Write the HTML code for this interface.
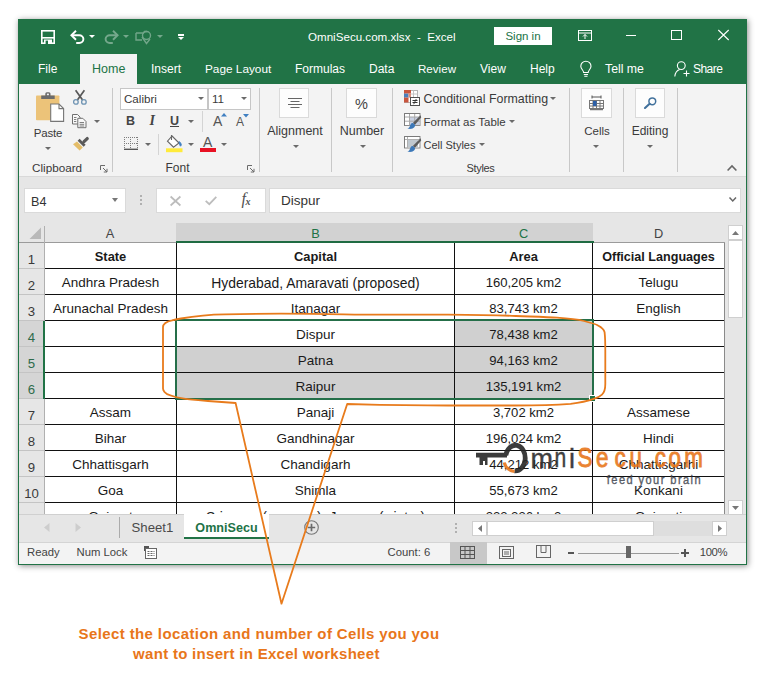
<!DOCTYPE html>
<html><head><meta charset="utf-8">
<style>
*{margin:0;padding:0;box-sizing:border-box}
html,body{width:764px;height:680px;overflow:hidden;background:#fff}
body{position:relative;font-family:"Liberation Sans",sans-serif;font-size:11px;color:#3a3a3a}
.a{position:absolute}
.t{position:absolute;white-space:nowrap;line-height:14px}
.w{color:#fff}
.c{text-align:center}
svg{position:absolute;overflow:visible}
#win{left:18px;top:19px;width:729px;height:546px;background:#e6e6e6;border:1px solid #217346;box-shadow:1px 1px 6px 0 rgba(0,0,0,.45)}
.sep{position:absolute;width:1px;background:#c8c8c8;top:88px;height:84px}
.bx{position:absolute;background:#fdfdfd;border:1px solid #dadada}
.ar{position:absolute;width:0;height:0;border-left:3px solid transparent;border-right:3px solid transparent;border-top:3px solid #6a6a6a}
</style></head><body>
<div id="win" class="a"></div>
<div class="a" style="left:19px;top:20px;width:727px;height:64px;background:#217346"></div>
<div class="a" style="left:80px;top:54px;width:57px;height:31px;background:#f3f3f3"></div>
<div class="a" id="ribbon" style="left:19px;top:84px;width:727px;height:92px;background:#f3f3f3"></div>
<div class="a" style="left:19px;top:176px;width:727px;height:1px;background:#d9d9d9"></div>
<!-- QAT icons -->
<svg style="left:41px;top:30px" width="14" height="14" viewBox="0 0 14 14"><rect x=".8" y=".8" width="12.4" height="12.4" fill="none" stroke="#fff" stroke-width="1.6"/><rect x="0" y="7" width="14" height="1.6" fill="#fff"/><rect x="3" y="9.5" width="8" height="4.5" fill="#fff"/><rect x="4.6" y="10.6" width="2.4" height="3.4" fill="#217346"/></svg>
<svg style="left:70px;top:30px" width="15" height="14" viewBox="0 0 15 14" fill="none" stroke="#fff" stroke-width="1.9"><path d="M6 .7 L1.4 5.2 L6 9.7"/><path d="M2 5.2 H9.2 A4.2 3.9 0 0 1 9.2 13 H6.2"/></svg>
<div class="ar" style="left:89px;top:35px;border-top-color:#fff"></div>
<svg style="left:104px;top:30px;opacity:.38" width="15" height="14" viewBox="0 0 15 14" fill="none" stroke="#fff" stroke-width="1.9"><path d="M9 .7 L13.6 5.2 L9 9.7"/><path d="M13 5.2 H5.8 A4.2 3.9 0 0 0 5.8 13 H8.8"/></svg>
<div class="ar" style="left:123px;top:35px;border-top-color:#fff;opacity:.38"></div>
<svg style="left:135px;top:29px;opacity:.36" width="17" height="16" viewBox="0 0 17 16" fill="none" stroke="#fff" stroke-width="1.4"><path d="M1 4 H8.5 L9.5 2.5 H12 M1 4 V11 H7"/><circle cx="11.5" cy="6.5" r="4"/><path d="M7 8 L11.5 14.5 L15 10"/></svg>
<div class="ar" style="left:157px;top:35px;border-top-color:#fff;opacity:.38"></div>
<div class="a" style="left:178px;top:34px;width:6px;height:1.5px;background:#fff"></div>
<div class="ar" style="left:178px;top:37px;border-top-color:#fff"></div>
<!-- title -->
<div class="t w" style="left:308px;top:30px;font-size:11.6px">OmniSecu.com.xlsx&nbsp; -&nbsp; Excel</div>
<div class="a" style="left:494px;top:27px;width:58px;height:18px;background:#fff"></div>
<div class="t c" style="left:494px;top:29px;width:58px;font-size:11.5px;color:#217346">Sign in</div>
<!-- window controls -->
<svg style="left:578px;top:30px" width="14" height="11" viewBox="0 0 14 11" fill="none" stroke="#fff" stroke-width="1"><rect x=".5" y=".5" width="13" height="10"/><path d="M.5 3 H13.5" /><path d="M7 9 V4.5 M5 6.5 L7 4.5 L9 6.5"/></svg>
<div class="a" style="left:626px;top:35px;width:10px;height:1px;background:#fff"></div>
<div class="a" style="left:671px;top:30px;width:11px;height:10px;border:1px solid #fff"></div>
<svg style="left:717.5px;top:30px" width="11" height="10" viewBox="0 0 11 10" stroke="#fff" stroke-width="1.1"><path d="M.3 0 L10.7 10 M10.7 0 L.3 10"/></svg>
<!-- tabs -->
<div class="t w" style="left:38px;top:62px;font-size:12px">File</div>
<div class="t" style="left:92px;top:62px;font-size:12.5px;color:#217346">Home</div>
<div class="t w" style="left:151px;top:62px;font-size:12px">Insert</div>
<div class="t w" style="left:205px;top:62px;font-size:11.8px">Page Layout</div>
<div class="t w" style="left:295px;top:62px;font-size:12px">Formulas</div>
<div class="t w" style="left:369px;top:62px;font-size:12px">Data</div>
<div class="t w" style="left:418px;top:62px;font-size:11.6px">Review</div>
<div class="t w" style="left:480px;top:62px;font-size:12px">View</div>
<div class="t w" style="left:530px;top:62px;font-size:12px">Help</div>
<svg style="left:580px;top:61px" width="12" height="16" viewBox="0 0 12 16" fill="none" stroke="#fff" stroke-width="1.1"><path d="M3.6 11.5 C3.6 9.2 .8 8.2 .8 5.3 A5 5 0 0 1 11 5.3 C11 8.2 8.2 9.2 8.2 11.5 Z"/><path d="M3.8 13.5 H8 M4.3 15.3 H7.5"/></svg>
<div class="t w" style="left:605px;top:62px;font-size:12.3px">Tell me</div>
<svg style="left:674px;top:61px" width="16" height="16" viewBox="0 0 16 16" fill="none" stroke="#fff" stroke-width="1.1"><circle cx="7.3" cy="4.6" r="3.9"/><path d="M.8 15.5 C1.2 11.5 3.4 9.4 5.6 8.6"/><path d="M9.5 12.5 H15.5 M12.5 9.5 V15.5"/></svg>
<div class="t w" style="left:693px;top:62px;font-size:12px;letter-spacing:-.55px">Share</div>
<!-- RIBBON: clipboard group -->
<svg style="left:36px;top:92px" width="29" height="31" viewBox="0 0 29 31"><rect x="0" y="3.4" width="23.4" height="24.8" rx=".8" fill="#ecc379"/><path d="M5.2 3.6 H9.3 V1.8 Q9.3 .3 10.8 .3 H13 Q14.5 .3 14.5 1.8 V3.6 H18.7 V6.9 H5.2 Z" fill="#6b6b6b"/><rect x="10.9" y="1.6" width="2" height="1.6" fill="#f3f3f3"/><path d="M14.7 12 H23 L27.6 16.6 V29.4 H14.7 Z" fill="#fff" stroke="#767676" stroke-width="1.1"/><path d="M23 12 V16.6 H27.6" fill="none" stroke="#767676" stroke-width="1.1"/></svg>
<div class="t c" style="left:24px;top:126px;width:48px;font-size:11.5px;letter-spacing:-.2px">Paste</div>
<div class="ar" style="left:45px;top:147px"></div>
<svg style="left:73px;top:90px" width="14" height="15" viewBox="0 0 14 15" fill="none"><path d="M2.6 .3 L9.6 10 M11.4 .3 L4.4 10" stroke="#585858" stroke-width="1.7"/><circle cx="2.9" cy="11.9" r="2.3" stroke="#6f94b3" stroke-width="1.3"/><circle cx="10.9" cy="11.9" r="2.3" stroke="#6f94b3" stroke-width="1.3"/></svg>
<svg style="left:72px;top:114px" width="15" height="15" viewBox="0 0 15 15" fill="#f8f8f8" stroke="#707070"><path d="M.5 .5 H5.5 L8 3 V10 H.5 Z"/><path d="M5.8 4.3 H10.8 L14 7.5 V13.7 H5.8 Z"/><path d="M2 3.5 H4.5 M2 5.5 H4.3 M2 7.5 H4.3 M7.6 8.5 H12 M7.6 10.3 H12.2 M7.6 12 H12.2" stroke-width=".9"/></svg>
<div class="ar" style="left:94px;top:120px"></div>
<svg style="left:73px;top:137px" width="16" height="14" viewBox="0 0 16 14"><path d="M14.2 1.6 L11 4.6" stroke="#5a5a5a" stroke-width="3.3" stroke-linecap="round"/><path d="M6.6 1.8 L12.6 7.8 L10.6 9.8 L4.6 3.8 Z" fill="#5a5a5a"/><path d="M4 4.6 L9.8 10.4 L6.6 13.4 L0 7.2 Z" fill="#e4bd69"/></svg>
<div class="t" style="left:32px;top:161px;font-size:11.7px">Clipboard</div>
<svg style="left:100px;top:165px" width="8" height="8" viewBox="0 0 8 8" fill="none" stroke="#6a6a6a" stroke-width="1"><path d="M.5 5 V.5 H5"/><path d="M3 3 L7 7 M7 3.8 V7 H3.8"/></svg>
<div class="sep" style="left:112px"></div>
<!-- font group -->
<div class="bx" style="left:120px;top:88px;width:88px;height:22px;border-color:#c6c6c6;background:#fff"></div>
<div class="bx" style="left:208px;top:88px;width:43px;height:22px;border-color:#c6c6c6;background:#fff"></div>
<div class="t" style="left:124px;top:92px;font-size:11.6px">Calibri</div>
<div class="ar" style="left:198px;top:97px"></div>
<div class="t" style="left:212px;top:92px;font-size:11.6px">11</div>
<div class="ar" style="left:241px;top:97px"></div>
<div class="t" style="left:126px;top:114px;font-size:12.5px;font-weight:bold;color:#444">B</div>
<div class="t" style="left:149.5px;top:114px;font-size:14px;font-style:italic;font-weight:bold;font-family:'Liberation Serif',serif;color:#444">I</div>
<div class="t" style="left:170px;top:114px;font-size:12.5px;font-weight:bold;text-decoration:underline;color:#444">U</div>
<div class="ar" style="left:188px;top:120px"></div>
<div class="a" style="left:202px;top:111px;width:1px;height:21px;background:#d4d4d4"></div>
<div class="t" style="left:213px;top:114px;font-size:14px;color:#555">A</div>
<svg style="left:221px;top:113px" width="6" height="4" viewBox="0 0 6 4"><path d="M0 3.5 L3 0 L6 3.5 Z" fill="#3f7fc1"/></svg>
<div class="t" style="left:236px;top:115px;font-size:12px;color:#555">A</div>
<svg style="left:243px;top:114px" width="6" height="4" viewBox="0 0 6 4"><path d="M0 0 L3 3.5 L6 0 Z" fill="#3f7fc1"/></svg>
<svg style="left:124px;top:137px" width="14" height="13" viewBox="0 0 14 13" fill="none" stroke="#7d7d7d"><path d="M0 .5 H14 M0 6.5 H14 M.5 0 V12 M6.5 0 V12 M13.5 0 V12" stroke-dasharray="1 1" stroke-width="1"/><path d="M0 12.3 H14" stroke="#555" stroke-width="1.4"/></svg>
<div class="ar" style="left:145px;top:143px"></div>
<div class="a" style="left:158px;top:134px;width:1px;height:21px;background:#d4d4d4"></div>
<svg style="left:166px;top:135px" width="17" height="18" viewBox="0 0 17 18"><path d="M6 1 L13 8 L7.5 12.2 L1.5 6.2 Z" fill="#fff" stroke="#666" stroke-width="1.1"/><path d="M5.5 0 V5" stroke="#666" stroke-width="1.1"/><path d="M13.2 6.5 C15.5 8.5 15.8 10 14.5 11.2 C13.6 10 13.4 9 13.2 6.5Z" fill="#3f7fc1" stroke="#3f7fc1"/><rect x="0" y="13.3" width="16.5" height="3.9" fill="#ffeb3b"/></svg>
<div class="ar" style="left:188px;top:143px"></div>
<div class="t" style="left:203px;top:135px;font-size:14px;color:#555">A</div>
<div class="a" style="left:200px;top:148.3px;width:16px;height:3.9px;background:#e81123"></div>
<div class="ar" style="left:221px;top:143px"></div>
<div class="t" style="left:165.5px;top:161px;font-size:12px">Font</div>
<svg style="left:247px;top:165px" width="8" height="8" viewBox="0 0 8 8" fill="none" stroke="#6a6a6a" stroke-width="1"><path d="M.5 5 V.5 H5"/><path d="M3 3 L7 7 M7 3.8 V7 H3.8"/></svg>
<div class="sep" style="left:259px"></div>
<!-- alignment -->
<div class="bx" style="left:279px;top:88px;width:30px;height:30px"></div>
<svg style="left:288px;top:98px" width="14" height="10" viewBox="0 0 14 10" stroke="#666" stroke-width="1"><path d="M0 .5 H14 M2.5 3.5 H11.5 M0 6.5 H14 M2.5 9.5 H11.5"/></svg>
<div class="t c" style="left:260px;top:124px;width:70px;font-size:12.5px">Alignment</div>
<div class="ar" style="left:292.5px;top:145px"></div>
<div class="sep" style="left:331px"></div>
<div class="bx" style="left:346px;top:88px;width:30.5px;height:30px"></div>
<div class="t c" style="left:346px;top:96.7px;width:31px;font-size:14.5px;color:#444">%</div>
<div class="t c" style="left:332px;top:124px;width:60px;font-size:12.5px">Number</div>
<div class="ar" style="left:359.5px;top:145px"></div>
<div class="sep" style="left:392px"></div>
<!-- styles -->
<svg style="left:404px;top:90px" width="17" height="16" viewBox="0 0 17 16"><rect x=".5" y=".5" width="13" height="12" fill="#fff" stroke="#b4b4b4"/><path d="M9.5 .5 V7 M7 4 H13.5" stroke="#c4c4c4" fill="none"/><rect x="0" y="0" width="7" height="3.6" fill="#c8553d"/><rect x="0" y="3.6" width="4.5" height="4" fill="#4a7ebb"/><rect x="4.5" y="3.6" width="2.5" height="4" fill="#d98c7a"/><rect x="0" y="7.6" width="4.5" height="4.9" fill="#c8553d"/><rect x="6.5" y="7.5" width="9" height="8" fill="#fff" stroke="#505050"/><path d="M8.5 10.5 H13.5 M8.5 12.5 H13.5" stroke="#333" stroke-width="1" fill="none"/><path d="M12.3 9 L9.7 14.2" stroke="#333" stroke-width=".9" fill="none"/></svg>
<div class="t" style="left:423.5px;top:92px;font-size:12.4px">Conditional Formatting</div>
<div class="ar" style="left:549.5px;top:97px"></div>
<svg style="left:404px;top:113px" width="18" height="17" viewBox="0 0 18 17"><rect x=".5" y=".5" width="15.5" height="12" fill="#fff" stroke="#8c8c8c"/><rect x="5.5" y="4" width="10" height="8" fill="#c9d1e3"/><path d="M.5 4 H16 M.5 8.2 H16 M5.5 .5 V12.5 M10.7 .5 V12.5" stroke="#a8a8a8" fill="none"/><path d="M.5 .5 H16 M.5 .5 V12.5" stroke="#7a7a7a" fill="none"/><path d="M16.6 2.2 L17.2 4.6 L11 11.8 L8.8 10 Z" fill="#5c5c5c"/><path d="M8.8 10 C6.8 9.8 6.4 12 5.6 13.8 C5 14.8 4.2 15.3 3.4 15.5 C7 16.8 11.5 15.3 11 11.8 Z" fill="#3c78b8"/></svg>
<div class="t" style="left:423.5px;top:115px;font-size:11.5px">Format as Table</div>
<div class="ar" style="left:508.5px;top:120px"></div>
<svg style="left:404px;top:136px" width="18" height="17" viewBox="0 0 18 17"><rect x=".5" y=".5" width="15.5" height="11.5" fill="#fff" stroke="#8c8c8c"/><rect x="3.5" y="3.5" width="10.5" height="7.5" fill="#bfc8cf"/><path d="M.5 3.5 H16 M3.5 .5 V12" stroke="#b0b0b0" fill="none"/><path d="M.5 .5 H16 M.5 .5 V12" stroke="#7a7a7a" fill="none"/><path d="M16.6 2.2 L17.2 4.6 L11 11.8 L8.8 10 Z" fill="#5c5c5c"/><path d="M8.8 10 C6.8 9.8 6.4 12 5.6 13.8 C5 14.8 4.2 15.3 3.4 15.5 C7 16.8 11.5 15.3 11 11.8 Z" fill="#3c78b8"/></svg>
<div class="t" style="left:423.5px;top:138px;font-size:11px">Cell Styles</div>
<div class="ar" style="left:478.5px;top:143px"></div>
<div class="t" style="left:466.4px;top:161px;font-size:11px;letter-spacing:-.3px">Styles</div>
<div class="sep" style="left:569px"></div>
<!-- cells / editing -->
<div class="bx" style="left:581px;top:88px;width:31px;height:30px"></div>
<svg style="left:589px;top:95px" width="15" height="15" viewBox="0 0 15 15" fill="none"><path d="M3 .5 V3.5 M12 .5 V3.5 M3 2 H12" stroke="#555"/><rect x=".5" y="5.5" width="14" height="8" fill="#fff" stroke="#777"/><path d="M.5 8.5 H14.5 M.5 11 H14.5 M4 5.5 V13.5 M7.5 5.5 V13.5 M11 5.5 V13.5" stroke="#777"/><rect x="4" y="6" width="3.5" height="5" fill="#2b5fa8"/><path d="M1 14.7 H14" stroke="#555"/></svg>
<div class="t c" style="left:572px;top:124px;width:50px;font-size:11.5px">Cells</div>
<div class="ar" style="left:593px;top:145px"></div>
<div class="sep" style="left:623px"></div>
<div class="bx" style="left:635px;top:88px;width:30px;height:30px"></div>
<svg style="left:644px;top:97px" width="13" height="12" viewBox="0 0 13 12" fill="none" stroke="#41719c"><circle cx="8.3" cy="4.3" r="3.4" stroke-width="1.5"/><path d="M5.6 6.8 L1 11" stroke-width="2.1" stroke-linecap="round"/></svg>
<div class="t c" style="left:625px;top:124px;width:50px;font-size:12px">Editing</div>
<div class="ar" style="left:647px;top:145px"></div>
<div class="sep" style="left:677px"></div>
<svg style="left:727px;top:165px" width="10" height="6" viewBox="0 0 10 6" fill="none" stroke="#666" stroke-width="1.6"><path d="M.6 5.5 L5 1 L9.4 5.5"/></svg>
<!-- formula bar -->
<div class="bx" style="left:24px;top:187.5px;width:102px;height:25.5px;background:#fff;border-color:#dadada"></div>
<div class="t" style="left:31px;top:194.5px;font-size:12.6px;color:#333">B4</div>
<div class="ar" style="left:112px;top:198px;border-left-width:3.5px;border-right-width:3.5px;border-top-width:4px;border-top-color:#777"></div>
<div class="a" style="left:140px;top:195px;width:2px;height:2px;background:#b0b0b0;box-shadow:0 4px 0 #b0b0b0,0 8px 0 #b0b0b0"></div>
<div class="bx" style="left:156px;top:187.5px;width:110px;height:25.5px;background:#fff;border-color:#dadada"></div>
<svg style="left:169.5px;top:195.5px" width="11" height="10" viewBox="0 0 11 10" stroke="#bcbcbc" stroke-width="1.7"><path d="M.6 .5 L10.4 9.5 M10.4 .5 L.6 9.5"/></svg>
<svg style="left:205px;top:196px" width="12" height="9" viewBox="0 0 12 9" fill="none" stroke="#bdbdbd" stroke-width="1.8"><path d="M.7 4.8 L4.3 8.2 L11.3 .8"/></svg>
<div class="t" style="left:241.5px;top:192px;font-size:16px;font-style:italic;font-family:'Liberation Serif',serif;color:#505050">f<span style="font-size:10px;font-weight:bold;position:relative;top:1px;left:-.5px">x</span></div>
<div class="bx" style="left:269px;top:187.5px;width:472px;height:25.5px;background:#fff;border-color:#dadada"></div>
<div class="t" style="left:281px;top:194px;font-size:13.5px;color:#333">Dispur</div>
<svg style="left:728.8px;top:197px" width="7.5" height="5" viewBox="0 0 7.5 5" fill="none" stroke="#666" stroke-width="1.5"><path d="M.5 .6 L3.75 4 L7 .6"/></svg>
<div class="a" id="gridclip" style="left:0;top:0;width:764px;height:514px;overflow:hidden">
<div class="a" style="left:45px;top:243px;width:679px;height:280px;background:#fff"></div>
<div class="a" style="left:176px;top:223px;width:417px;height:19px;background:#d2d2d2"></div>
<div class="a" style="left:19px;top:321px;width:25px;height:77px;background:#d5d5d5"></div>
<div class="a" style="left:177px;top:347px;width:415px;height:51px;background:#d0d0d0"></div>
<div class="a" style="left:455px;top:321px;width:137px;height:26px;background:#d0d0d0"></div>
<div class="a" style="left:19px;top:242px;width:706px;height:1px;background:#9b9b9b"></div>
<div class="a" style="left:44px;top:226px;width:1px;height:300px;background:#b0b0b0"></div>
<div class="a" style="left:176px;top:226px;width:1px;height:16px;background:#d2d2d2"></div>
<div class="a" style="left:454px;top:226px;width:1px;height:16px;background:#d2d2d2"></div>
<div class="a" style="left:592px;top:226px;width:1px;height:16px;background:#d2d2d2"></div>
<div class="a" style="left:19px;top:268px;width:25px;height:1px;background:#c4c4c4"></div>
<div class="a" style="left:19px;top:294px;width:25px;height:1px;background:#c4c4c4"></div>
<div class="a" style="left:19px;top:320px;width:25px;height:1px;background:#c4c4c4"></div>
<div class="a" style="left:19px;top:346px;width:25px;height:1px;background:#c4c4c4"></div>
<div class="a" style="left:19px;top:372px;width:25px;height:1px;background:#c4c4c4"></div>
<div class="a" style="left:19px;top:398px;width:25px;height:1px;background:#c4c4c4"></div>
<div class="a" style="left:19px;top:424px;width:25px;height:1px;background:#c4c4c4"></div>
<div class="a" style="left:19px;top:450px;width:25px;height:1px;background:#c4c4c4"></div>
<div class="a" style="left:19px;top:476px;width:25px;height:1px;background:#c4c4c4"></div>
<div class="a" style="left:19px;top:502px;width:25px;height:1px;background:#c4c4c4"></div>
<div class="a" style="left:19px;top:528px;width:25px;height:1px;background:#c4c4c4"></div>
<div class="a" style="left:45px;top:268px;width:680px;height:1px;background:#111"></div>
<div class="a" style="left:45px;top:294px;width:680px;height:1px;background:#111"></div>
<div class="a" style="left:45px;top:320px;width:680px;height:1px;background:#111"></div>
<div class="a" style="left:45px;top:346px;width:680px;height:1px;background:#111"></div>
<div class="a" style="left:45px;top:372px;width:680px;height:1px;background:#111"></div>
<div class="a" style="left:45px;top:398px;width:680px;height:1px;background:#111"></div>
<div class="a" style="left:45px;top:424px;width:680px;height:1px;background:#111"></div>
<div class="a" style="left:45px;top:450px;width:680px;height:1px;background:#111"></div>
<div class="a" style="left:45px;top:476px;width:680px;height:1px;background:#111"></div>
<div class="a" style="left:45px;top:502px;width:680px;height:1px;background:#111"></div>
<div class="a" style="left:45px;top:528px;width:680px;height:1px;background:#111"></div>
<div class="a" style="left:176px;top:243px;width:1px;height:280px;background:#111"></div>
<div class="a" style="left:454px;top:243px;width:1px;height:280px;background:#111"></div>
<div class="a" style="left:592px;top:243px;width:1px;height:280px;background:#111"></div>
<div class="a" style="left:724px;top:243px;width:1px;height:280px;background:#8a8a8a"></div>
<div class="a" style="left:176px;top:241px;width:418px;height:2px;background:#1f6b42"></div>
<div class="a" style="left:43px;top:321px;width:2px;height:78px;background:#217346"></div>
<div class="a" style="left:175px;top:319px;width:419px;height:81px;border:2px solid #256f49"></div>
<div class="a" style="left:589px;top:395px;width:7px;height:7px;background:#217346;border:1px solid #fff"></div>
<svg style="left:29px;top:227px" width="13" height="13" viewBox="0 0 13 13"><path d="M12 .5 V12 H.5 Z" fill="#b9b9b9"/></svg>
<div class="t c" style="left:90px;top:227px;width:40px;font-size:12.8px;color:#444">A</div>
<div class="t c" style="left:295.5px;top:227px;width:40px;font-size:12.8px;color:#217346">B</div>
<div class="t c" style="left:503.5px;top:227px;width:40px;font-size:12.8px;color:#217346">C</div>
<div class="t c" style="left:638.5px;top:227px;width:40px;font-size:12.8px;color:#444">D</div>
<div class="t c" style="left:19px;top:252.8px;width:25px;font-size:13.2px;color:#3a3a3a">1</div>
<div class="t c" style="left:19px;top:278.8px;width:25px;font-size:13.2px;color:#3a3a3a">2</div>
<div class="t c" style="left:19px;top:304.8px;width:25px;font-size:13.2px;color:#3a3a3a">3</div>
<div class="t c" style="left:19px;top:330.8px;width:25px;font-size:13.2px;color:#2e6b4b">4</div>
<div class="t c" style="left:19px;top:356.8px;width:25px;font-size:13.2px;color:#2e6b4b">5</div>
<div class="t c" style="left:19px;top:382.8px;width:25px;font-size:13.2px;color:#2e6b4b">6</div>
<div class="t c" style="left:19px;top:408.8px;width:25px;font-size:13.2px;color:#3a3a3a">7</div>
<div class="t c" style="left:19px;top:434.8px;width:25px;font-size:13.2px;color:#3a3a3a">8</div>
<div class="t c" style="left:19px;top:460.8px;width:25px;font-size:13.2px;color:#3a3a3a">9</div>
<div class="t c" style="left:19px;top:486.8px;width:25px;font-size:13.2px;color:#3a3a3a">10</div>
<div class="t c" style="left:19px;top:512.8px;width:25px;font-size:13.2px;color:#3a3a3a">11</div>
<div class="t c" style="left:45px;top:243.6px;width:131px;line-height:26px;color:#1a1a1a;font-weight:bold;font-size:12.9px">State</div>
<div class="t c" style="left:177px;top:243.6px;width:277px;line-height:26px;color:#1a1a1a;font-weight:bold;font-size:12.9px">Capital</div>
<div class="t c" style="left:455px;top:243.6px;width:137px;line-height:26px;color:#1a1a1a;font-weight:bold;font-size:12.9px">Area</div>
<div class="t c" style="left:593px;top:243.6px;width:131px;line-height:26px;color:#1a1a1a;font-weight:bold;font-size:12.6px">Official Languages</div>
<div class="t c" style="left:45px;top:270px;width:131px;line-height:26px;color:#1a1a1a;font-size:13.5px">Andhra Pradesh</div>
<div class="t c" style="left:177px;top:270px;width:277px;line-height:26px;color:#1a1a1a;font-size:13.9px">Hyderabad, Amaravati (proposed)</div>
<div class="t c" style="left:455px;top:270px;width:137px;line-height:26px;color:#1a1a1a;font-size:13.1px">160,205 km2</div>
<div class="t c" style="left:593px;top:270px;width:131px;line-height:26px;color:#1a1a1a;font-size:13.5px">Telugu</div>
<div class="t c" style="left:45px;top:296px;width:131px;line-height:26px;color:#1a1a1a;font-size:13.5px">Arunachal Pradesh</div>
<div class="t c" style="left:177px;top:296px;width:277px;line-height:26px;color:#1a1a1a;font-size:13.5px">Itanagar</div>
<div class="t c" style="left:455px;top:296px;width:137px;line-height:26px;color:#1a1a1a;font-size:13.1px">83,743 km2</div>
<div class="t c" style="left:593px;top:296px;width:131px;line-height:26px;color:#1a1a1a;font-size:13.5px">English</div>
<div class="t c" style="left:177px;top:322px;width:277px;line-height:26px;color:#1a1a1a;font-size:13.5px">Dispur</div>
<div class="t c" style="left:455px;top:322px;width:137px;line-height:26px;color:#1a1a1a;font-size:13.1px">78,438 km2</div>
<div class="t c" style="left:177px;top:348px;width:277px;line-height:26px;color:#1a1a1a;font-size:13.5px">Patna</div>
<div class="t c" style="left:455px;top:348px;width:137px;line-height:26px;color:#1a1a1a;font-size:13.1px">94,163 km2</div>
<div class="t c" style="left:177px;top:374px;width:277px;line-height:26px;color:#1a1a1a;font-size:13.5px">Raipur</div>
<div class="t c" style="left:455px;top:374px;width:137px;line-height:26px;color:#1a1a1a;font-size:13.1px">135,191 km2</div>
<div class="t c" style="left:45px;top:400px;width:131px;line-height:26px;color:#1a1a1a;font-size:13.5px">Assam</div>
<div class="t c" style="left:177px;top:400px;width:277px;line-height:26px;color:#1a1a1a;font-size:13.5px">Panaji</div>
<div class="t c" style="left:455px;top:400px;width:137px;line-height:26px;color:#1a1a1a;font-size:13.1px">3,702 km2</div>
<div class="t c" style="left:593px;top:400px;width:131px;line-height:26px;color:#1a1a1a;font-size:13.5px">Assamese</div>
<div class="t c" style="left:45px;top:426px;width:131px;line-height:26px;color:#1a1a1a;font-size:13.5px">Bihar</div>
<div class="t c" style="left:177px;top:426px;width:277px;line-height:26px;color:#1a1a1a;font-size:13.5px">Gandhinagar</div>
<div class="t c" style="left:455px;top:426px;width:137px;line-height:26px;color:#1a1a1a;font-size:13.1px">196,024 km2</div>
<div class="t c" style="left:593px;top:426px;width:131px;line-height:26px;color:#1a1a1a;font-size:13.5px">Hindi</div>
<div class="t c" style="left:45px;top:452px;width:131px;line-height:26px;color:#1a1a1a;font-size:13.5px">Chhattisgarh</div>
<div class="t c" style="left:177px;top:452px;width:277px;line-height:26px;color:#1a1a1a;font-size:13.5px">Chandigarh</div>
<div class="t c" style="left:455px;top:452px;width:137px;line-height:26px;color:#1a1a1a;font-size:13.1px">44,212 km2</div>
<div class="t c" style="left:593px;top:452px;width:131px;line-height:26px;color:#1a1a1a;font-size:13.5px">Chhattisgarhi</div>
<div class="t c" style="left:45px;top:478px;width:131px;line-height:26px;color:#1a1a1a;font-size:13.5px">Goa</div>
<div class="t c" style="left:177px;top:478px;width:277px;line-height:26px;color:#1a1a1a;font-size:13.5px">Shimla</div>
<div class="t c" style="left:455px;top:478px;width:137px;line-height:26px;color:#1a1a1a;font-size:13.1px">55,673 km2</div>
<div class="t c" style="left:593px;top:478px;width:131px;line-height:26px;color:#1a1a1a;font-size:13.5px">Konkani</div>
<div class="t c" style="left:45px;top:504px;width:131px;line-height:26px;color:#1a1a1a;font-size:13.5px">Gujarat</div>
<div class="t c" style="left:177px;top:504px;width:277px;line-height:26px;color:#1a1a1a;font-size:13.9px">Srinagar (summer), Jammu (winter)</div>
<div class="t c" style="left:455px;top:504px;width:137px;line-height:26px;color:#1a1a1a;font-size:13.1px">222,236 km2</div>
<div class="t c" style="left:593px;top:504px;width:131px;line-height:26px;color:#1a1a1a;font-size:13.5px">Gujarati</div>
</div>
<div class="a" style="left:728px;top:225px;width:15px;height:15px;background:#fff;border:1px solid #cfcfcf"></div>
<svg style="left:732px;top:230.5px" width="7" height="4" viewBox="0 0 7 4"><path d="M0 4 L3.5 0 L7 4 Z" fill="#777"/></svg>
<div class="a" style="left:728px;top:240px;width:15px;height:78px;background:#fff;border:1px solid #cfcfcf"></div>
<div class="a" style="left:728px;top:500px;width:15px;height:15px;background:#fff;border:1px solid #cfcfcf"></div>
<svg style="left:732px;top:506px" width="7" height="4" viewBox="0 0 7 4"><path d="M0 0 L3.5 4 L7 0 Z" fill="#777"/></svg>
<!-- sheet tab row -->
<div class="a" style="left:19px;top:514px;width:727px;height:1px;background:#d0d0d0"></div>
<svg style="left:44px;top:523px" width="6" height="9" viewBox="0 0 6 9"><path d="M5.5 0 V9 L0 4.5 Z" fill="#cdcdcd"/></svg>
<svg style="left:75px;top:523px" width="6" height="9" viewBox="0 0 6 9"><path d="M.5 0 V9 L6 4.5 Z" fill="#cdcdcd"/></svg>
<div class="a" style="left:119px;top:517px;width:1px;height:21px;background:#ababab"></div>
<div class="t" style="left:131.5px;top:520.5px;font-size:13.2px;color:#4a4a4a">Sheet1</div>
<div class="a" style="left:184px;top:514px;width:85px;height:25px;background:#fff;border-bottom:2px solid #217346"></div>
<div class="t c" style="left:184px;top:520.5px;width:85px;font-size:12.6px;font-weight:bold;color:#217346">OmniSecu</div>
<svg style="left:304px;top:520px" width="15" height="15" viewBox="0 0 15 15" fill="none" stroke="#777"><circle cx="7.5" cy="7.5" r="6.8" stroke-width="1.1"/><path d="M7.5 3.8 V11.2 M3.8 7.5 H11.2" stroke-width="1.7" stroke="#6b6b6b"/></svg>
<!-- h scrollbar -->
<div class="a" style="left:455px;top:523px;width:2px;height:2px;background:#b0b0b0;box-shadow:0 4px 0 #b0b0b0,0 8px 0 #b0b0b0"></div>
<div class="a" style="left:472px;top:521px;width:255px;height:15px;background:#dedede"></div>
<div class="a" style="left:472px;top:521px;width:15px;height:15px;background:#fff;border:1px solid #cfcfcf"></div>
<svg style="left:477.5px;top:525px" width="4" height="7" viewBox="0 0 4 7"><path d="M4 0 V7 L0 3.5 Z" fill="#777"/></svg>
<div class="a" style="left:487px;top:521px;width:167px;height:15px;background:#fff;border:1px solid #cfcfcf"></div>
<div class="a" style="left:712px;top:521px;width:15px;height:15px;background:#fff;border:1px solid #cfcfcf"></div>
<svg style="left:718px;top:525px" width="4" height="7" viewBox="0 0 4 7"><path d="M0 0 V7 L4 3.5 Z" fill="#777"/></svg>
<!-- status bar -->
<div class="a" style="left:19px;top:542px;width:727px;height:22px;background:#f3f3f3;border-top:1px solid #d4d4d4"></div>
<div class="t" style="left:27px;top:545px;font-size:11.3px;color:#444">Ready</div>
<div class="t" style="left:76.5px;top:545px;font-size:11.3px;color:#444">Num Lock</div>
<svg style="left:144px;top:546px" width="13" height="13" viewBox="0 0 13 13"><rect x="0" y="0" width="5" height="5" fill="#555"/><rect x="1.5" y="2.5" width="11" height="10" fill="#fff" stroke="#666"/><path d="M3.5 5.5 H10.5 M3.5 7.5 H10.5 M3.5 9.5 H10.5" stroke="#666" stroke-dasharray="2 1"/></svg>
<div class="t" style="left:387.5px;top:545px;font-size:11.3px;color:#444">Count: 6</div>
<div class="a" style="left:450px;top:542px;width:37px;height:22px;background:#c8c8c8"></div>
<svg style="left:460px;top:546px" width="15" height="13" viewBox="0 0 15 13" fill="none" stroke="#555"><rect x=".5" y=".5" width="14" height="12"/><path d="M.5 4.5 H14.5 M.5 8.5 H14.5 M5 .5 V12.5 M10 .5 V12.5"/></svg>
<svg style="left:499px;top:546px" width="15" height="13" viewBox="0 0 15 13" fill="none" stroke="#666"><rect x=".5" y=".5" width="14" height="12"/><rect x="3.5" y="3.5" width="8" height="7"/><path d="M5 6 H10 M5 8 H10"/></svg>
<svg style="left:536px;top:545px" width="15" height="13" viewBox="0 0 15 13" fill="none" stroke="#666"><rect x=".5" y=".5" width="14" height="12"/><path d="M5 .5 V7.5 H10 V.5"/></svg>
<div class="a" style="left:568px;top:552px;width:6px;height:2px;background:#555"></div>
<div class="a" style="left:578px;top:552.5px;width:101px;height:1px;background:#999"></div>
<div class="a" style="left:626px;top:546px;width:5px;height:12px;background:#666"></div>
<div class="a" style="left:681px;top:552px;width:8px;height:2px;background:#555"></div>
<div class="a" style="left:684px;top:549px;width:2px;height:8px;background:#555"></div>
<div class="t" style="left:699.8px;top:545px;font-size:11.3px;color:#444;letter-spacing:-.4px">100%</div>
<!-- watermark -->
<svg style="left:0;top:0" width="764" height="514" viewBox="0 0 764 514">
<g opacity=".9">
<path d="M476 452.8 H507 V457.4 H487.5 V465 H485 V461 H483 V465 H479.5 V457.4 H476 Z" fill="#262626"/>
<path d="M505.8 455.5 A9.8 12.8 0 1 1 514.5 470.8" fill="none" stroke="#262626" stroke-width="4.8"/>
<path d="M504.2 462.5 Q506 470 514.5 471.5" fill="none" stroke="#e8761a" stroke-width="3.2"/>
<text y="467.5" font-family="'Liberation Sans',sans-serif" font-size="27" fill="#2c2c2c" stroke="#2c2c2c" stroke-width=".4"><tspan x="530.4">m</tspan></text>
<text transform="translate(556,0) scale(.78,1)" x="-1.8" y="467.5" font-family="'Liberation Sans',sans-serif" font-size="27" fill="#2c2c2c" stroke="#2c2c2c" stroke-width=".5">n</text>
<text x="569" y="467.5" font-family="'Liberation Sans',sans-serif" font-size="27" fill="#2c2c2c" stroke="#2c2c2c" stroke-width=".4">i</text>
<text transform="scale(0.8,1)" x="722.0 745.0 768.1 786.9 808.8 818.5 835.6 855.4" y="467.4" font-family="'Liberation Sans',sans-serif" font-size="28" fill="#e8761a" stroke="#e8761a" stroke-width=".9">Secu.com</text>
<text transform="scale(.82,1)" x="740.0" y="483.6" font-family="'Liberation Sans',sans-serif" font-size="13.5" letter-spacing="1.75" fill="#454a54" stroke="#454a54" stroke-width=".35">feed your brain</text>
</g>
</svg>
<!-- orange callout -->
<svg style="left:0;top:0" width="764" height="680" viewBox="0 0 764 680" fill="none" stroke="#e87b1c" stroke-width="1.8" stroke-linejoin="round" stroke-linecap="round">
<path d="M181 318.5 C195 316 210 314.5 225 314.3 C260 313.5 300 313.5 344 314.3 C380 315 420 314.5 448 314.6 C475 314.8 500 315.3 516 316 C535 316.7 548 317 557 317.7 C570 318.5 578 319.5 584 321 C592 323 596 324 598 325.5 C602 327.5 604 329.5 604.6 332.3 C605.3 338 605.3 345 605.3 351 V384 C605.3 389.5 604.6 392.3 602 394.6 C600 396.4 597.5 397.6 594.4 398.7 C588 401 580 402.8 570.6 403.8 C555 405 535 405.5 516 405.5 H448 C425 405.3 400 405 380 404.8 L347.2 404 L281.5 603.7 L235.6 403 L208 401 C198 400.3 190 399.8 184 398.7 C174 397 167 395.5 164.5 392 C163 390 163 389 163 388.5 V327 C163 324 167 321.5 172 320.3 C175 319.5 178 319 181 318.5 Z"/>
</svg>
<!-- caption -->
<div class="t c" id="cap1" style="left:59px;top:624px;width:400px;font-size:15px;letter-spacing:.39px;line-height:20px;font-weight:bold;color:#e8761a">Select the location and number of Cells you you</div>
<div class="t c" id="cap2" style="left:56.4px;top:644px;width:400px;font-size:15px;letter-spacing:.3px;line-height:20px;font-weight:bold;color:#e8761a">want to insert in Excel worksheet</div>
</body></html>
